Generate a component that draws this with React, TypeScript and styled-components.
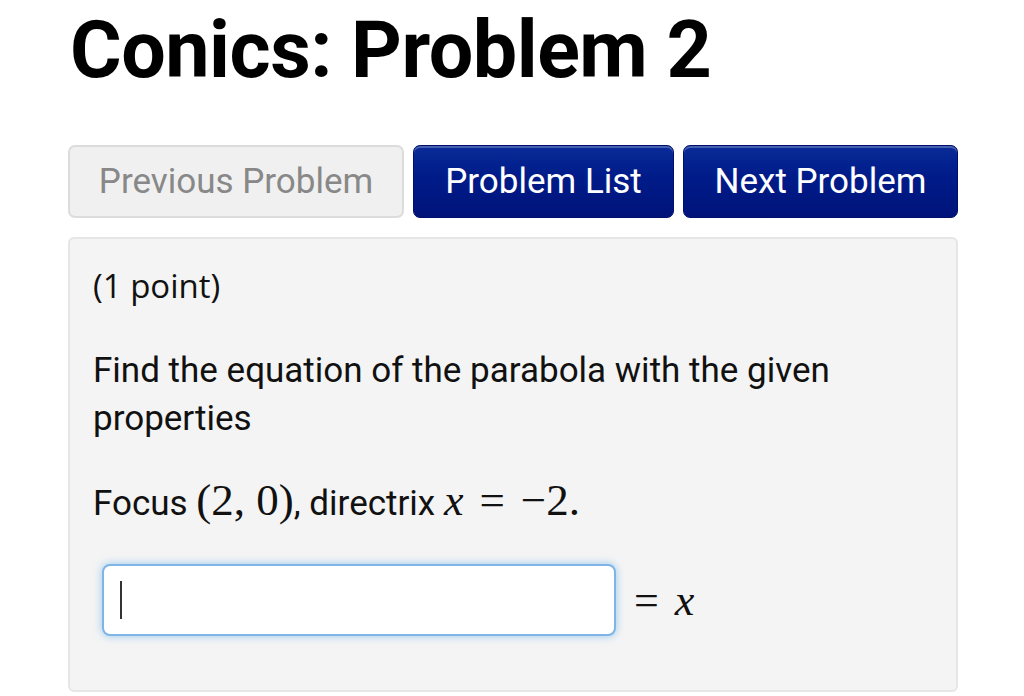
import styled, { createGlobalStyle } from "styled-components";

const GlobalStyle = createGlobalStyle`
  html, body {
    margin: 0;
    padding: 0;
    background: #ffffff;
  }
  body {
    font-family: Roboto, "Liberation Sans", sans-serif;
    color: #111111;
  }
`;

const Page = styled.div`
  width: 890px;
  padding: 0 0 0 68px;
`;

const Title = styled.h1`
  margin: 0;
  padding: 6px 0 0 2px;
  height: 141px;
  box-sizing: border-box;
  font-family: Roboto, "Liberation Sans", sans-serif;
  font-weight: 700;
  font-size: 79px;
  line-height: 88px;
  color: #000000;
  letter-spacing: -0.5px;
`;

const NavBar = styled.div`
  display: flex;
  gap: 9px;
  margin-top: 4px;
`;

const NavButton = styled.button<{ $disabled?: boolean; $width: number }>`
  flex: 0 0 ${(p) => p.$width}px;
  height: 73px;
  box-sizing: border-box;
  padding: 0;
  border-radius: 7px;
  font-family: Roboto, "Liberation Sans", sans-serif;
  font-size: 35px;
  cursor: pointer;
  ${(p) =>
    p.$disabled
      ? `
    background: #f0f0f0;
    color: #888888;
    border: 2px solid #dcdcdc;
  `
      : `
    background: linear-gradient(#0a2c98, #001c8a 40%, #00137a);
    color: #ffffff;
    border: 1px solid #00106a;
    box-shadow: inset 0 2px 0 rgba(255,255,255,0.25);
  `}
`;

const Panel = styled.div`
  margin-top: 19px;
  background: #f4f4f4;
  border: 2px solid #e6e6e6;
  border-radius: 6px;
  padding: 20px 24px 54px 23px;
`;

const Points = styled.p`
  margin: 0;
  font-family: "Open Sans", "Noto Sans", sans-serif;
  font-size: 33px;
  line-height: 54px;
  color: #111111;
`;

const Para = styled.p<{ $gap: number }>`
  margin: ${(p) => p.$gap}px 0 0;
  font-size: 35px;
  line-height: 48px;
  color: #111111;
`;

const Math = styled.span`
  font-family: "Liberation Serif", "DejaVu Serif", serif;
  font-size: 45px;
  line-height: 40px;
`;

const MathVar = styled.i`
  font-family: "Liberation Serif", "DejaVu Serif", serif;
  font-size: 44px;
  line-height: 40px;
`;

const Op = styled.span<{ $left?: number }>`
  margin: 0 16px 0 ${(p) => p.$left ?? 16}px;
`;

const AnswerRow = styled.div`
  display: flex;
  align-items: center;
  gap: 18px;
  margin: 36px 0 0 9px;
`;

const AnswerBox = styled.div`
  position: relative;
  width: 514px;
  height: 72px;
  box-sizing: border-box;
  background: #ffffff;
  border: 2px solid #7fb4e6;
  border-radius: 8px;
  box-shadow: 0 0 8px rgba(102, 175, 233, 0.65);
`;

const Caret = styled.span`
  position: absolute;
  left: 16px;
  top: 15px;
  width: 2px;
  height: 38px;
  background: #333333;
`;

const Suffix = styled.span`
  font-family: "Liberation Serif", "DejaVu Serif", serif;
  font-size: 44px;
  color: #111111;
`;

export default function App() {
  return (
    <>
      <GlobalStyle />
      <Page>
        <Title>Conics: Problem 2</Title>
        <NavBar>
          <NavButton $disabled $width={336}>
            Previous Problem
          </NavButton>
          <NavButton $width={261}>Problem List</NavButton>
          <NavButton $width={275}>Next Problem</NavButton>
        </NavBar>
        <Panel>
          <Points>(1 point)</Points>
          <Para $gap={34}>
            Find the equation of the parabola with the given properties
          </Para>
          <Para $gap={37}>
            Focus <Math>(2, 0)</Math>, directrix <MathVar>x</MathVar>
            <Math>
              <Op>=</Op>−2.
            </Math>
          </Para>
          <AnswerRow>
            <AnswerBox>
              <Caret />
            </AnswerBox>
            <Suffix>
              <Op $left={0}>=</Op>
              <i>x</i>
            </Suffix>
          </AnswerRow>
        </Panel>
      </Page>
    </>
  );
}
